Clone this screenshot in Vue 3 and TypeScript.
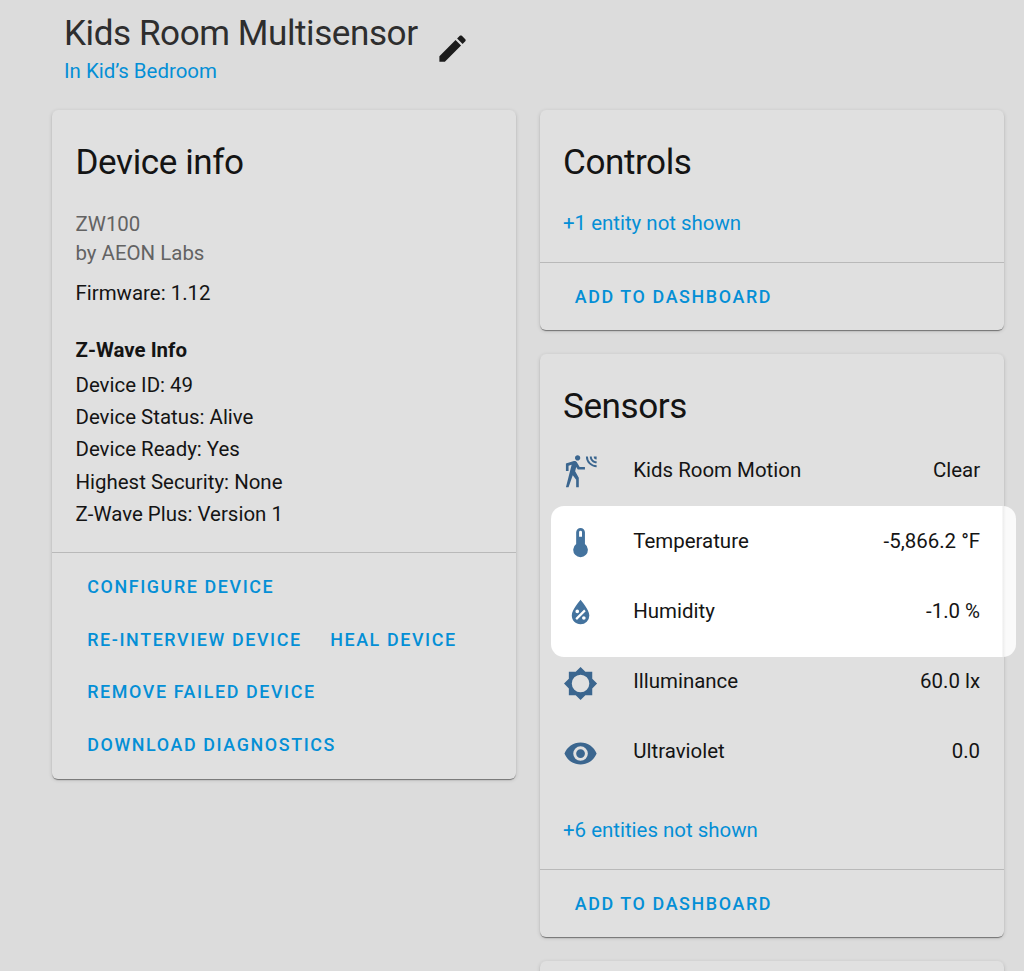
<script setup lang="ts">
interface Sensor {
  name: string
  value: string
  icon: string
  highlighted?: boolean
}

const pencil =
  'M20.71,7.04C21.1,6.65 21.1,6 20.71,5.63L18.37,3.29C18,2.9 17.35,2.9 16.96,3.29L15.12,5.12L18.87,8.87M3,17.25V21H6.75L17.81,9.93L14.06,6.18L3,17.25Z'

const zwave: string[] = [
  'Device ID: 49',
  'Device Status: Alive',
  'Device Ready: Yes',
  'Highest Security: None',
  'Z-Wave Plus: Version 1',
]

const actions: string[][] = [
  ['Configure device'],
  ['Re-interview device', 'Heal device'],
  ['Remove failed device'],
  ['Download diagnostics'],
]

const sensors: Sensor[] = [
  {
    name: 'Kids Room Motion',
    value: 'Clear',
    icon: 'M10,0.2C9,0.2 8.2,1 8.2,2C8.2,3 9,3.8 10,3.8C11,3.8 11.8,3 11.8,2C11.8,1 11,0.2 10,0.2M15.67,1A7.33,7.33 0 0,0 23,8.33V7A6,6 0 0,1 17,1H15.67M18.33,1C18.33,3.58 20.42,5.67 23,5.67V4.33C21.16,4.33 19.67,2.84 19.67,1H18.33M21,1A2,2 0 0,0 23,3V1H21M7.92,4.03C7.75,4.03 7.58,4.06 7.42,4.11L2,5.8V11H3.8V7.33L5.91,6.67L2,22H3.8L6.67,13.89L9,17V22H10.8V15.59L8.31,11.05L9.04,8.18L10.12,10H15V8.2H11.38L9.38,4.87C9.08,4.37 8.54,4.03 7.92,4.03Z',
  },
  {
    name: 'Temperature',
    value: '-5,866.2 °F',
    highlighted: true,
    icon: 'M15 13V5A3 3 0 0 0 9 5V13A5 5 0 1 0 15 13M12 4A1 1 0 0 1 13 5V8H11V5A1 1 0 0 1 12 4Z',
  },
  {
    name: 'Humidity',
    value: '-1.0 %',
    highlighted: true,
    icon: 'M12,3.25C12,3.25 6,10 6,14C6,17.32 8.69,20 12,20A6,6 0 0,0 18,14C18,10 12,3.25 12,3.25M14.47,9.97L15.53,11.03L9.53,17.03L8.47,15.97M9.75,10A1.25,1.25 0 0,1 11,11.25A1.25,1.25 0 0,1 9.75,12.5A1.25,1.25 0 0,1 8.5,11.25A1.25,1.25 0 0,1 9.75,10M14.25,14.5A1.25,1.25 0 0,1 15.5,15.75A1.25,1.25 0 0,1 14.25,17A1.25,1.25 0 0,1 13,15.75A1.25,1.25 0 0,1 14.25,14.5Z',
  },
  {
    name: 'Illuminance',
    value: '60.0 lx',
    icon: 'M12,18A6,6 0 0,1 6,12A6,6 0 0,1 12,6A6,6 0 0,1 18,12A6,6 0 0,1 12,18M20,15.31L23.31,12L20,8.69V4H15.31L12,0.69L8.69,4H4V8.69L0.69,12L4,15.31V20H8.69L12,23.31L15.31,20H20V15.31Z',
  },
  {
    name: 'Ultraviolet',
    value: '0.0',
    icon: 'M12,9A3,3 0 0,0 9,12A3,3 0 0,0 12,15A3,3 0 0,0 15,12A3,3 0 0,0 12,9M12,17A5,5 0 0,1 7,12A5,5 0 0,1 12,7A5,5 0 0,1 17,12A5,5 0 0,1 12,17M12,4.5C7,4.5 2.73,7.61 1,12C2.73,16.39 7,19.5 12,19.5C17,19.5 21.27,16.39 23,12C21.27,7.61 17,4.5 12,4.5Z',
  },
]
</script>

<template>
  <main class="page">
    <header class="header">
      <div>
        <h1 class="name">Kids Room Multisensor</h1>
        <a class="area">In Kid’s Bedroom</a>
      </div>
      <svg class="icon edit" viewBox="0 0 24 24"><path :d="pencil" /></svg>
    </header>

    <div class="columns">
      <section class="card info">
        <div class="content">
          <h2 class="title">Device info</h2>
          <div class="model">ZW100<br />by AEON Labs</div>
          <div class="firmware">Firmware: 1.12</div>
          <h3 class="subtitle">Z-Wave Info</h3>
          <div v-for="line in zwave" :key="line" class="line">{{ line }}</div>
        </div>
        <footer class="actions">
          <div v-for="(row, i) in actions" :key="i" class="action-row">
            <button v-for="label in row" :key="label" class="button">{{ label }}</button>
          </div>
        </footer>
      </section>

      <div class="column">
        <section class="card controls">
          <div class="content">
            <h2 class="title">Controls</h2>
            <a class="more">+1 entity not shown</a>
          </div>
          <footer class="actions">
            <div class="action-row"><button class="button">Add to dashboard</button></div>
          </footer>
        </section>

        <section class="card sensors">
          <div class="highlight"></div>
          <div class="content">
            <h2 class="title">Sensors</h2>
            <div class="rows">
              <div v-for="s in sensors" :key="s.name" class="row" :class="{ lit: s.highlighted }">
                <svg class="icon" viewBox="0 0 24 24"><path :d="s.icon" /></svg>
                <span class="label">{{ s.name }}</span>
                <span>{{ s.value }}</span>
              </div>
            </div>
            <a class="more">+6 entities not shown</a>
          </div>
          <footer class="actions">
            <div class="action-row"><button class="button">Add to dashboard</button></div>
          </footer>
        </section>

        <section class="card next"></section>
      </div>
    </div>
  </main>
</template>

<style>
body {
  background: #dcdcdc;
  overflow: hidden;
}
</style>

<style scoped>
.page {
  box-sizing: border-box;
  height: 971px;
  overflow: hidden;
  padding: 0 20px 0 52px;
  background: #dcdcdc;
  color: #141414;
  font-family: Roboto, sans-serif;
  font-size: 20.45px;
  white-space: nowrap;
}
h1,
h2,
h3 {
  margin: 0;
  font-weight: 400;
}
.header {
  box-sizing: border-box;
  display: flex;
  height: 110px;
  padding: 13px 0 0 12px;
}
.name {
  color: #2e2e2e;
  font-size: 35.1px;
  letter-spacing: -0.0125em;
  line-height: 40px;
}
.area {
  display: block;
  margin-top: 4px;
  line-height: 28px;
}
.area,
.more {
  color: #048fd6;
}
.icon {
  flex: none;
  width: 35.1px;
  height: 35.1px;
  fill: #3b668f;
}
.edit {
  margin: 18px 0 0 17.9px;
  fill: #1c1c1c;
}
.columns {
  display: grid;
  grid-template-columns: 464.4px 463.6px;
  gap: 23.6px;
  align-items: start;
}
.column {
  display: flex;
  flex-direction: column;
  gap: 24px;
}
.card {
  box-sizing: border-box;
  position: relative;
  display: flex;
  flex-direction: column;
  border-radius: 6px;
  background: #e0e0e0;
  box-shadow:
    0 2px 1px -1px rgba(0, 0, 0, 0.28),
    0 1px 1px rgba(0, 0, 0, 0.2),
    0 1px 4px rgba(0, 0, 0, 0.14);
}
.info {
  height: 668.5px;
}
.controls {
  height: 220px;
}
.sensors {
  height: 583px;
}
.next {
  height: 60px;
}
.content {
  position: relative;
  flex: 1;
  padding: 28px 23.5px 0;
}
.column .content {
  padding-left: 23px;
}
.title {
  font-size: 35.1px;
  letter-spacing: -0.012em;
  line-height: 48px;
}
.model {
  margin-top: 23.5px;
  color: #636363;
  line-height: 29.25px;
}
.firmware {
  margin-top: 10px;
  line-height: 30px;
}
.subtitle {
  margin: 26px 0 2.7px;
  font-size: 20.45px;
  font-weight: 700;
  line-height: 32.2px;
}
.line {
  line-height: 32.2px;
}
.controls .more {
  display: block;
  margin-top: 22px;
  line-height: 30px;
}
.rows {
  margin-top: 5.4px;
}
.row {
  display: flex;
  height: 70.2px;
  line-height: 70.2px;
}
.row .icon {
  margin-top: 19.6px;
}
.row.lit .icon {
  fill: #44739e;
}
.label {
  flex: 1;
  margin-left: 35.2px;
}
.sensors .more {
  display: block;
  margin-top: 28.6px;
  line-height: 30px;
}
.actions {
  position: relative;
  border-top: 1px solid #b9b9b9;
  padding: 7.7px 23.5px 6.9px;
}
.column .actions {
  padding: 8px 23px 6.3px;
}
.action-row {
  display: flex;
  gap: 5px;
}
.button {
  height: 52.7px;
  margin: 0;
  border: 0;
  padding: 0 11.7px;
  background: none;
  color: #048fd6;
  font: 500 17.9px/52.7px Roboto, sans-serif;
  letter-spacing: 1.6px;
  text-transform: uppercase;
}
.highlight {
  position: absolute;
  top: 152px;
  right: -12px;
  left: 11.4px;
  height: 150.5px;
  border-radius: 13px;
  background: linear-gradient(to right, #fff 451px, #ededed 452px, #f2f2f2 453px, #fafafa 455px);
}
</style>
